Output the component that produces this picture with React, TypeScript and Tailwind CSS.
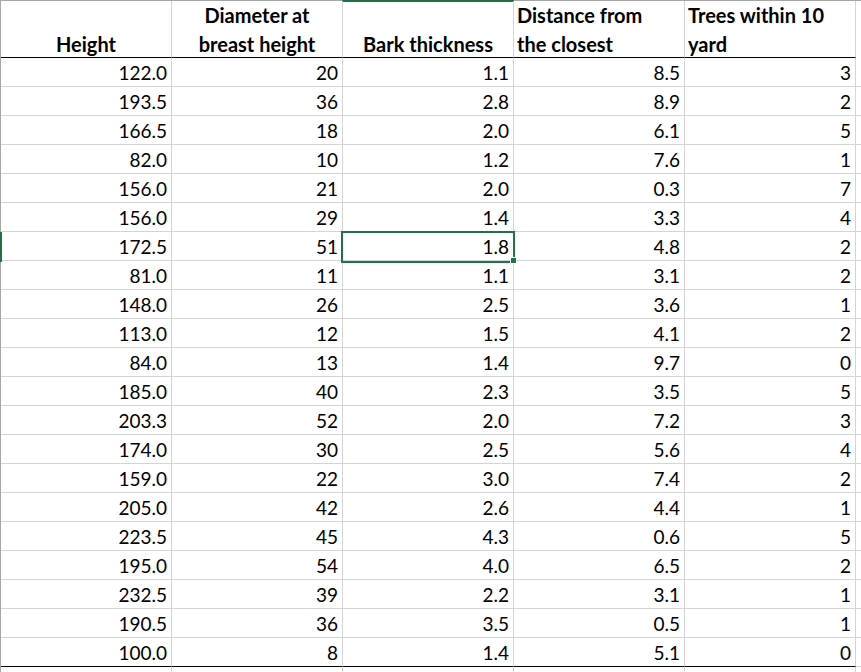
import React from 'react'

const headers = [
  { label: ['Height'], align: 'center' },
  { label: ['Diameter at', 'breast height'], align: 'center' },
  { label: ['Bark thickness'], align: 'center' },
  { label: ['Distance from', 'the closest'], align: 'left' },
  { label: ['Trees within 10', 'yard'], align: 'left' },
]

const rows = [
  ['122.0', '20', '1.1', '8.5', '3'],
  ['193.5', '36', '2.8', '8.9', '2'],
  ['166.5', '18', '2.0', '6.1', '5'],
  ['82.0', '10', '1.2', '7.6', '1'],
  ['156.0', '21', '2.0', '0.3', '7'],
  ['156.0', '29', '1.4', '3.3', '4'],
  ['172.5', '51', '1.8', '4.8', '2'],
  ['81.0', '11', '1.1', '3.1', '2'],
  ['148.0', '26', '2.5', '3.6', '1'],
  ['113.0', '12', '1.5', '4.1', '2'],
  ['84.0', '13', '1.4', '9.7', '0'],
  ['185.0', '40', '2.3', '3.5', '5'],
  ['203.3', '52', '2.0', '7.2', '3'],
  ['174.0', '30', '2.5', '5.6', '4'],
  ['159.0', '22', '3.0', '7.4', '2'],
  ['205.0', '42', '2.6', '4.4', '1'],
  ['223.5', '45', '4.3', '0.6', '5'],
  ['195.0', '54', '4.0', '6.5', '2'],
  ['232.5', '39', '2.2', '3.1', '1'],
  ['190.5', '36', '3.5', '0.5', '1'],
  ['100.0', '8', '1.4', '5.1', '0'],
]

export default function App() {
  return (
    <div
      className="relative w-[861px] h-[672px] overflow-hidden bg-white text-black"
      style={{ fontFamily: 'Lato, "Open Sans", sans-serif' }}
    >
      {/* Column header edge (top) with selected column highlight */}
      <div className="h-px bg-[#a6a6a6] relative">
        <div className="absolute left-[342px] top-0 w-[172px] h-[2px] bg-[#217346]"></div>
      </div>

      <div className="relative border-l border-[#a6a6a6]">
        <div className="grid grid-cols-[171px_171px_171px_171px_171px_1fr]">
          {/* Header row */}
          {headers.map((h, i) => (
            <div
              key={i}
              className={`h-[57px] border-r border-b border-r-[#d4d4d4] border-b-black flex items-end text-[20px] font-bold leading-[29px] ${
                h.align === 'center' ? 'justify-center text-center' : 'justify-start text-left pl-[3px]'
              }`}
            >
              <span className="translate-y-[2px]">
                {h.label.map((line, j) => (
                  <span key={j} className="block whitespace-nowrap">
                    {line}
                  </span>
                ))}
              </span>
            </div>
          ))}
          <div className="h-[57px]"></div>

          {/* Data rows */}
          {rows.map((row, r) => (
            <React.Fragment key={r}>
              {row.map((v, c) => (
                <div
                  key={c}
                  className={`h-[29px] border-r border-b border-r-[#d4d4d4] flex items-end justify-end pr-[4px] text-[19px] leading-[27px] ${
                    r === rows.length - 1 ? 'border-b-black' : 'border-b-[#d4d4d4]'
                  }`}
                >
                  {v}
                </div>
              ))}
              <div className="h-[29px] border-b border-[#d4d4d4]"></div>
            </React.Fragment>
          ))}

          {/* Partial row below */}
          {[0, 1, 2, 3, 4].map((c) => (
            <div key={c} className="h-[10px] border-r border-[#d4d4d4]"></div>
          ))}
          <div className="h-[10px]"></div>
        </div>

        {/* Selected row highlight on row header edge */}
        <div className="absolute -left-px top-[231px] w-[2px] h-[30px] bg-[#217346]"></div>

        {/* Active cell */}
        <div className="absolute left-[340px] top-[230px] w-[174px] h-[32px] border-2 border-[#217346]"></div>
        <div className="absolute left-[509px] top-[256px] w-[7px] h-[7px] bg-[#217346] border border-white"></div>
      </div>
    </div>
  )
}
